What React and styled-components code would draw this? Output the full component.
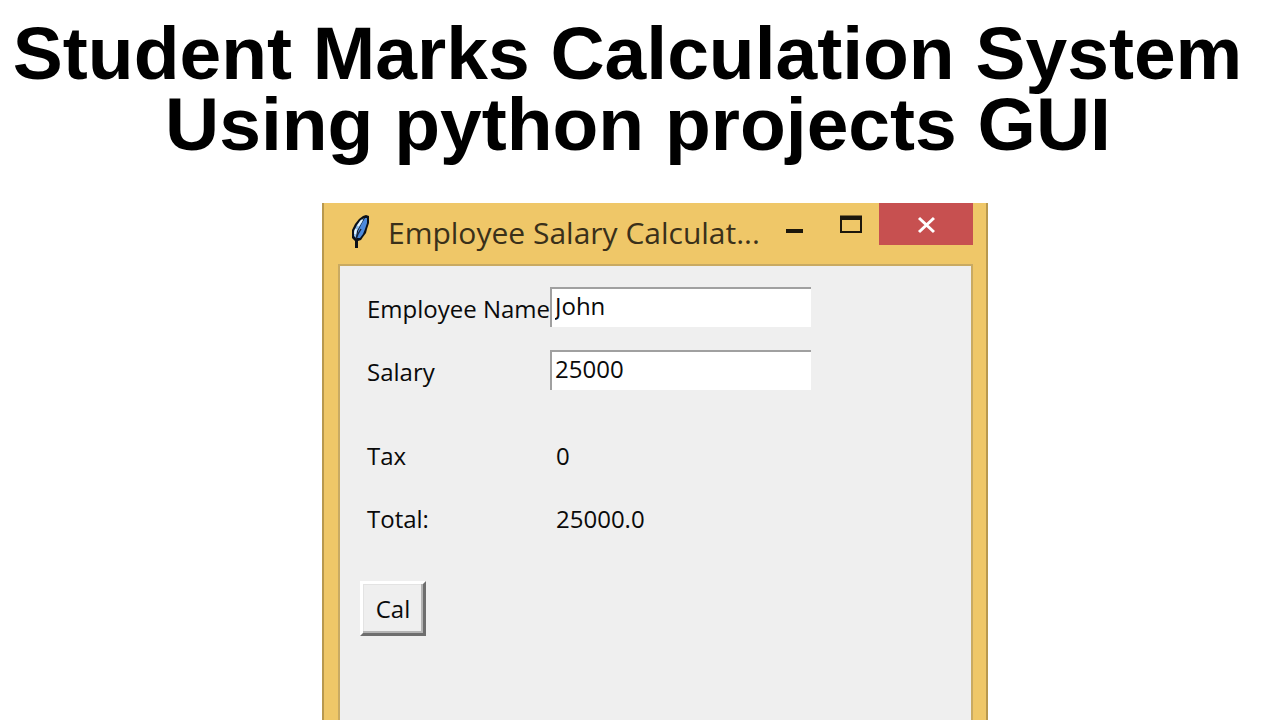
import { useState } from "react";
import styled, { createGlobalStyle } from "styled-components";

const GlobalStyle = createGlobalStyle`
  * {
    box-sizing: border-box;
  }
  body {
    margin: 0;
    background: #ffffff;
  }
`;

const uiFont = `"Open Sans", "Noto Sans", sans-serif`;

function calculate(salary) {
  const amount = Number(salary) || 0;
  const tax = amount > 30000 ? amount * 0.1 : 0;
  return { tax, total: (amount - tax).toFixed(1) };
}

function FeatherIcon() {
  return (
    <svg width="24" height="36" viewBox="0 0 24 36" aria-hidden="true">
      <path
        d="M17 1 L20 2 L20 9 L18 15 L17 19 L14 23 L12 26 L9 27 L9 34 L6 34 L6 27 L3 24 L3 16 L6 10 L10 5 L14 2 Z"
        fill="#0c1118"
      />
      <path
        d="M16 4 L18 4 L18 9 L16 15 L14 20 L11 24 L8 24 L9 17 L13 9 Z"
        fill="#4d8add"
      />
      <path d="M15 4 L12 10 L8 17 L7 24 L5 22 L5 17 L8 11 L11 7 Z" fill="#8fbdec" />
      <path d="M12 15 L9 20 L7 25" fill="none" stroke="#16243d" strokeWidth="1.400" />
      <path
        d="M13 6 L9 12 M7 15 L6 20"
        fill="none"
        stroke="#e6f6ff"
        strokeWidth="2"
      />
    </svg>
  );
}

function TitleBar() {
  return (
    <Bar>
      <IconSlot>
        <FeatherIcon />
      </IconSlot>
      <WindowTitle>Employee Salary Calculat...</WindowTitle>
      <Controls>
        <ControlButton $width={58} aria-label="Minimize">
          <svg width="18" height="42" viewBox="0 0 18 42">
            <rect x="1" y="26" width="17" height="4" fill="#1c170c" />
          </svg>
        </ControlButton>
        <ControlButton $width={56} aria-label="Maximize">
          <svg width="22" height="42" viewBox="0 0 22 42">
            <path
              fillRule="evenodd"
              d="M0 12.500H22V30H0Z M2 17V28H20V17Z"
              fill="#1c170c"
            />
          </svg>
        </ControlButton>
        <ControlButton $width={94} $close aria-label="Close">
          <svg width="18" height="42" viewBox="0 0 18 42">
            <path d="M2 15L17 29M17 15L2 29" stroke="#ffffff" strokeWidth="3" />
          </svg>
        </ControlButton>
      </Controls>
    </Bar>
  );
}

function SalaryForm() {
  const [name, setName] = useState("John");
  const [salary, setSalary] = useState("25000");
  const [result, setResult] = useState(calculate("25000"));

  const handleSubmit = (e) => {
    e.preventDefault();
    setResult(calculate(salary));
  };

  return (
    <Form onSubmit={handleSubmit}>
      <Fields>
        <Label htmlFor="name">Employee Name</Label>
        <Entry id="name" value={name} onChange={(e) => setName(e.target.value)} />
        <Label htmlFor="salary">Salary</Label>
        <Entry
          id="salary"
          value={salary}
          onChange={(e) => setSalary(e.target.value)}
        />
      </Fields>
      <Fields>
        <Label htmlFor="tax">Tax</Label>
        <Value id="tax">{result.tax}</Value>
        <Label htmlFor="total">Total:</Label>
        <Value id="total">{result.total}</Value>
      </Fields>
      <CalButton type="submit">Cal</CalButton>
    </Form>
  );
}

function App() {
  return (
    <Page>
      <GlobalStyle />
      <Heading>
        Student Marks Calculation System&nbsp;
        <br />
        Using python projects GUI
      </Heading>
      <Stage>
        <Window>
          <TitleBar />
          <Client>
            <SalaryForm />
          </Client>
        </Window>
      </Stage>
    </Page>
  );
}

const Page = styled.div`
  display: flex;
  flex-direction: column;
  min-height: 100vh;
`;

const Heading = styled.h1`
  margin: 0;
  padding: 18px 4px 43px 0;
  font: bold 75px/71px "Liberation Sans", Arial, sans-serif;
  text-align: center;
  color: #000000;
`;

const Stage = styled.main`
  flex: 1;
  display: flex;
  justify-content: center;
  padding-left: 30px;
`;

const Window = styled.section`
  display: flex;
  flex-direction: column;
  width: 100%;
  max-width: 666px;
  padding: 0 13px 0 14px;
  background: #efc768;
  border: solid #b8984e;
  border-width: 0 2px;
  font-family: ${uiFont};
`;

const Bar = styled.header`
  display: flex;
  height: 61px;
`;

const IconSlot = styled.span`
  padding: 11px 0 0 11px;
`;

const WindowTitle = styled.h2`
  flex: 1;
  min-width: 0;
  margin: 0;
  padding: 10px 0 0 15px;
  font-size: 30px;
  font-weight: 400;
  line-height: 40px;
  white-space: nowrap;
  color: #3a301a;
`;

const Controls = styled.div`
  display: flex;
  align-items: flex-start;
`;

const ControlButton = styled.button`
  display: flex;
  justify-content: center;
  width: ${(p) => p.$width}px;
  height: 42px;
  padding: 0;
  border: 0;
  background: ${(p) => (p.$close ? "#c75050" : "transparent")};
`;

const Client = styled.div`
  flex: 1;
  background: #efefef;
  border: 2px solid #c9aa62;
  border-bottom: 0;
`;

const Form = styled.form`
  display: flex;
  flex-direction: column;
  align-items: flex-start;
  gap: 44px;
  padding: 21px 20px 0;
  font-size: 24px;
  color: #0a0a0a;
`;

const Fields = styled.div`
  display: grid;
  grid-template-columns: 183px 261px;
  row-gap: 23px;
  padding-left: 7px;
  line-height: 40px;
`;

const Label = styled.label`
  height: 40px;
  padding-top: 2px;
  white-space: nowrap;
`;

const Entry = styled.input`
  width: 100%;
  height: 40px;
  padding: 0 3px 4px;
  border: solid #a0a0a0;
  border-width: 2px 0 0 2px;
  background: #ffffff;
  color: inherit;
  font: inherit;
  outline: none;
`;

const Value = styled.output`
  height: 40px;
  padding: 2px 0 0 6px;
`;

const CalButton = styled.button`
  width: 66px;
  height: 55px;
  padding: 0;
  border: 3px solid;
  border-color: #ffffff #6e6e6e #6e6e6e #ffffff;
  background: #efefef;
  box-shadow: inset -2px -2px #b4b4b4, inset 1px 1px #e3e3e3;
  color: inherit;
  font: inherit;
`;

export default App;
